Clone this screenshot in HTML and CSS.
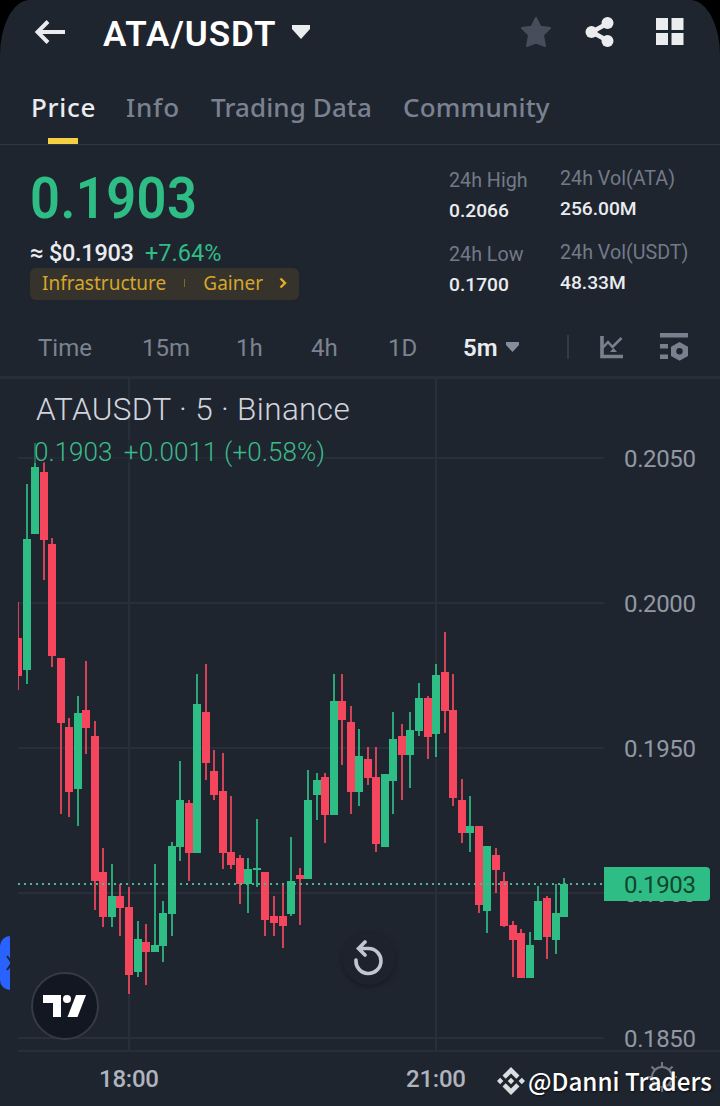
FILE: index.html
```
<!DOCTYPE html>
<html lang="en">
<head>
    <meta charset="UTF-8">
    <meta name="viewport" content="width=device-width, initial-scale=1.0">
    <title>ATA/USDT</title>
    <link rel="stylesheet" href="styles.css">
</head>
<body>
    <div class="app">
        <header>
            <svg class="back" width="32" height="26" viewBox="0 0 32 26"><path d="M30 13H3M13 2.500L2.500 13L13 23.500" fill="none" stroke="#eaecef" stroke-width="4"/></svg>
            <h1>ATA/USDT</h1>
            <svg class="caret" width="18" height="14" viewBox="0 0 18 14"><path d="M0 0H18V4L9 14L0 4Z" fill="#eaecef"/></svg>
            <div class="actions">
                <svg width="32" height="32" viewBox="0 0 32 32"><path d="M16 2L20.300 10.800L30 12L23 19L25 30L16 26.500L7 30L9 19L2 12L11.700 10.800Z" fill="#474d5b" stroke="#474d5b" stroke-width="2" stroke-linejoin="round"/></svg>
                <svg width="30" height="32" viewBox="0 0 30 32"><path d="M23 7L7 16L23 25" fill="none" stroke="#eaecef" stroke-width="4.500"/><circle cx="6.500" cy="16" r="6" fill="#eaecef"/><circle cx="22.500" cy="7" r="6" fill="#eaecef"/><circle cx="22.500" cy="25" r="6" fill="#eaecef"/></svg>
                <svg width="28" height="28" viewBox="0 0 28 28"><path d="M0 0H12V12H0ZM15.500 0H27.500V12H15.500ZM0 15H12V27H0ZM15.500 15H27.500V27H15.500Z" fill="#eaecef"/></svg>
            </div>
        </header>

        <nav class="tabs">
            <a class="tab tab-price active">Price</a>
            <a class="tab tab-info">Info</a>
            <a class="tab tab-data">Trading Data</a>
            <a class="tab tab-community">Community</a>
        </nav>

        <section class="ticker">
            <div class="ticker-main">
                <div class="price">0.1903</div>
                <div class="fiat"><span class="approx">≈</span><span class="usd">$0.1903</span><span class="change">+7.64%</span></div>
                <div class="tags">
                    <span>Infrastructure</span>
                    <i class="tag-line"></i>
                    <span>Gainer</span>
                    <svg width="8" height="12" viewBox="0 0 8 12"><path d="M1.500 1.500L6 6L1.500 10.500" fill="none" stroke="#e2ae25" stroke-width="2.400"/></svg>
                </div>
            </div>
            <div class="stats stats-range">
                <span class="label">24h High</span>
                <span class="value">0.2066</span>
                <span class="label">24h Low</span>
                <span class="value">0.1700</span>
            </div>
            <div class="stats stats-volume">
                <span class="label">24h Vol(ATA)</span>
                <span class="value">256.00M</span>
                <span class="label">24h Vol(USDT)</span>
                <span class="value">48.33M</span>
            </div>
        </section>

        <div class="intervals">
            <span class="time">Time</span>
            <span class="m15">15m</span>
            <span class="h1">1h</span>
            <span class="h4">4h</span>
            <span class="d1">1D</span>
            <span class="m5">5m</span>
            <svg class="m5-caret" width="13" height="10" viewBox="0 0 13 10"><path d="M0 0H13V3L6.500 10L0 3Z" fill="#848e9c"/></svg>
            <i class="divider"></i>
            <svg class="indicator" width="23" height="24" viewBox="0 0 23 24"><path d="M2 1V21.500H23" fill="none" stroke="#79818f" stroke-width="3.600"/><path d="M3 12.500L8 7L12.500 12L21.500 3" fill="none" stroke="#79818f" stroke-width="2.500"/><path d="M10 17L13.500 13L17 17Z" fill="#79818f"/></svg>
            <svg class="tuning" width="28" height="30" viewBox="0 0 28 30"><path d="M0 1H28V5.500H0ZM0 12H8V16.500H0ZM0 22.500H8V27H0Z" fill="#79818f"/><path d="M19.500 10L28 14.700V24L19.500 28.700L11 24V14.700Z" fill="#79818f"/><circle cx="19.500" cy="19.300" r="3.200" fill="#1f252f"/></svg>
        </div>

        <main class="chart">
            <svg class="plot" width="720" height="727" viewBox="0 379 720 727">
                <g class="grid">
                    <path d="M18 458H604M18 603H604M18 748H604M18 893H604M18 1038H604M18 1051H720M129 379V1050M436 379V1050"/>
                </g>
                <g id="candles"></g>
                <path class="price-line" d="M18 884H604"/>
                <g class="axis-price">
                    <text x="624" y="467" textLength="72">0.2050</text>
                    <text x="624" y="612" textLength="72">0.2000</text>
                    <text x="624" y="757" textLength="72">0.1950</text>
                    <text x="624" y="902" textLength="72">0.1900</text>
                    <text x="624" y="1047" textLength="72">0.1850</text>
                </g>
                <path d="M604 867H706Q710 867 710 871V897Q710 901 706 901H604Z" fill="#2ebd85"/>
                <text class="last-price" x="624" y="893" textLength="72">0.1903</text>
                <g class="axis-time">
                    <text x="99" y="1087" textLength="60">18:00</text>
                    <text x="406" y="1087" textLength="60">21:00</text>
                </g>
            </svg>
            <div class="legend">
                <div class="legend-title">ATAUSDT · 5 · Binance</div>
                <div class="legend-values"><span class="legend-last">0.1903</span><span class="legend-change">+0.0011 (+0.58%)</span></div>
            </div>
            <div class="drawer"><svg width="10" height="16" viewBox="0 0 10 16"><path d="M7 1L12 8L7 15" fill="none" stroke="#1b2337" stroke-width="2"/></svg></div>
            <div class="tv-logo">
                <svg width="44" height="24" viewBox="0 0 44 24"><path d="M0 1H18V23H10V9H0Z" fill="#fff"/><circle cx="24" cy="5" r="4" fill="#fff"/><path d="M33 1H43L34.500 23H24.500Z" fill="#fff"/></svg>
            </div>
            <div class="reset">
                <svg width="30" height="36" viewBox="0 0 30 36"><path d="M2 20A12.500 12.500 0 1 0 14.500 8.500H5M11 2L4.500 8.500L11 15" fill="none" stroke="#c3c6d0" stroke-width="3.600" stroke-linecap="round"/></svg>
            </div>
            <svg class="gear" width="32" height="32" viewBox="0 0 32 32"><g fill="none" stroke="#737780" stroke-width="2"><circle cx="16" cy="16" r="10"/><path d="M16 6V1M16 26V31M6 16H1M26 16H31M9 9L5.500 5.500M23 9L26.500 5.500M9 23L5.500 26.500M23 23L26.500 26.500"/></g></svg>
            <div class="watermark">
                <svg width="28" height="28" viewBox="0 0 28 28"><g fill="#dcdde0"><path d="M14 0L22.500 8.500L19.300 11.700L14 6.400L8.700 11.700L5.500 8.500Z"/><path d="M14 28L22.500 19.500L19.300 16.300L14 21.600L8.700 16.300L5.500 19.500Z"/><path d="M14 10.800L17.200 14L14 17.200L10.800 14ZM3.200 10.800L6.400 14L3.200 17.200L0 14ZM24.800 10.800L28 14L24.800 17.200L21.600 14Z"/></g></svg>
                <span>@Danni Traders</span>
            </div>
        </main>
    </div>
    <script src="chart.js"></script>
</body>
</html>
```
FILE: styles.css
```
body {
    margin: 0;
    background: #000;
    font-family: Roboto, "Liberation Sans", sans-serif;
    color: #eaecef;
}

.app {
    display: flex;
    flex-direction: column;
    width: 720px;
    height: 1106px;
    overflow: hidden;
    border-radius: 30px 30px 0 0 / 55px 55px 0 0;
    background: #1f252f;
}

svg {
    display: block;
    flex: none;
}

span, a, h1, .price, .legend-title {
    white-space: nowrap;
}

header {
    display: flex;
    align-items: center;
    height: 64px;
    padding: 0 36px 0 35px;
}

header h1 {
    width: 189px;
    margin: 5px 0 0 36px;
    font-size: 35px;
    font-weight: 600;
    line-height: 40px;
    letter-spacing: 1px;
    color: #fff;
}

.actions {
    display: flex;
    align-items: center;
    gap: 33px;
    margin-left: auto;
}

.actions svg:last-child {
    margin-left: 8px;
}

.tabs {
    display: flex;
    height: 81px;
    padding-left: 31px;
    box-sizing: border-box;
    border-bottom: 1px solid #303743;
    font-family: "Noto Sans", sans-serif;
    font-size: 26px;
    font-weight: 500;
    line-height: 36px;
    color: #7a8190;
}

.tab {
    box-sizing: border-box;
    padding-top: 25px;
}

.tab-price {
    width: 95px;
    letter-spacing: 0.7px;
}

.tab-info {
    width: 85px;
    letter-spacing: 0.8px;
}

.tab-data {
    width: 192px;
    letter-spacing: 0.1px;
}

.tab-community {
    letter-spacing: 0.2px;
}

.tab.active {
    color: #eaecef;
}

.tab.active::after {
    content: "";
    display: block;
    width: 30px;
    height: 6px;
    margin: 13px 0 0 17px;
    background: #f5d043;
}

.ticker {
    display: flex;
    height: 167px;
    padding-left: 30px;
}

.ticker-main {
    width: 419px;
}

.price {
    height: 60px;
    margin-top: 24px;
    font-size: 57px;
    font-weight: 600;
    line-height: 60px;
    letter-spacing: 0.5px;
    color: #2ebd85;
    transform: scaleX(0.92);
    transform-origin: left;
}

.fiat {
    display: flex;
    height: 30px;
    margin-top: 9px;
    font-size: 23.500px;
    font-weight: 500;
    line-height: 30px;
}

.approx {
    width: 19px;
    font-size: 24px;
}

.usd {
    width: 96px;
    letter-spacing: -0.3px;
}

.change {
    font-weight: 400;
    color: #2ebd85;
}

.tags {
    display: flex;
    align-items: center;
    width: 269px;
    height: 32px;
    padding: 0 0 2px 12px;
    box-sizing: border-box;
    border-radius: 6px;
    background: #35332c;
    font-family: "Noto Sans", sans-serif;
    font-size: 19px;
    color: #d6a62a;
}

.tag-line {
    width: 1px;
    height: 8px;
    margin: 0 18px;
    background: #80692a;
}

.tags svg {
    margin-left: 16px;
}

.stats {
    display: flex;
    flex-direction: column;
    padding-top: 23px;
    font-size: 19.700px;
    line-height: 26px;
}

.stats-range {
    width: 111px;
}

.stats-volume {
    padding-top: 21px;
}

.label {
    color: #727a88;
}

.value {
    margin: 4px 0 18px;
    font-weight: 500;
    line-height: 26px;
    font-size: 19.200px;
}

.intervals {
    display: flex;
    align-items: center;
    height: 67px;
    padding: 5px 0 0 38px;
    box-sizing: border-box;
    border-bottom: 3px solid #282e39;
    font-size: 24px;
    color: #7b8391;
}

.intervals span {
    padding-top: 2px;
}

.time {
    width: 104px;
}

.m15 {
    width: 94px;
}

.h1 {
    width: 75px;
}

.h4 {
    width: 77px;
}

.d1 {
    width: 75px;
}

.m5 {
    width: 43px;
    font-weight: 600;
    color: #eaecef;
}

.divider {
    width: 2px;
    height: 24px;
    margin: 0 31px 0 48px;
    background: #343b47;
}

.tuning {
    margin-left: 37px;
}

.chart {
    position: relative;
    flex: 1;
}

.grid path {
    fill: none;
    stroke: #292f3a;
    stroke-width: 2;
}

.up {
    fill: #2ebd85;
}

.down {
    fill: #f6465d;
}

.wick {
    opacity: 0.85;
}

.price-line {
    stroke: #48b894;
    stroke-width: 2;
    stroke-dasharray: 2 4;
}

.axis-price text {
    font-size: 24px;
    fill: #9298a3;
}

.last-price {
    font-size: 24px;
    fill: #12452f;
}

.axis-time text {
    font-size: 24px;
    font-weight: 500;
    fill: #b0b4be;
}

.legend {
    position: absolute;
    top: 12px;
    left: 36px;
}

.legend-title {
    font-size: 31.500px;
    font-weight: 300;
    line-height: 38px;
    letter-spacing: 0.35px;
    color: #d1d4dc;
}

.legend-values {
    display: flex;
    width: 291px;
    height: 24px;
    margin: 10px 0 0 -2px;
    background: rgba(31, 37, 47, 0.5);
    font-size: 26px;
    font-weight: 300;
    line-height: 26px;
    color: #3bbb8a;
}

.legend-last {
    width: 90px;
}

.legend-change {
    letter-spacing: 0.1px;
}

.drawer {
    position: absolute;
    top: 557px;
    left: 0;
    display: flex;
    align-items: center;
    width: 10px;
    height: 54px;
    overflow: hidden;
    border-radius: 10px 0 0 10px;
    background: #2962ff;
}

.tv-logo {
    position: absolute;
    top: 593px;
    left: 31px;
    display: flex;
    align-items: center;
    justify-content: center;
    width: 64px;
    height: 64px;
    border: 2px solid #363a45;
    border-radius: 50%;
    background: #131722;
}

.reset {
    position: absolute;
    top: 552px;
    left: 342px;
    display: flex;
    align-items: center;
    justify-content: center;
    width: 54px;
    height: 54px;
    border-radius: 50%;
    background: #1e222d;
    box-shadow: 0 2px 5px rgba(0, 0, 0, 0.3);
}

.gear {
    position: absolute;
    top: 682px;
    left: 646px;
}

.watermark {
    position: absolute;
    top: 684px;
    left: 497px;
    display: flex;
    align-items: center;
    gap: 3px;
    font-family: "Noto Sans CJK SC", sans-serif;
    font-size: 24.200px;
    font-weight: 500;
    line-height: 36px;
    color: #fff;
    text-shadow: 1px 1px 2px rgba(0, 0, 0, 0.7);
}
```
FILE: chart.js
```
// [direction, high, body top, body bottom, low]
const candles = [
    ['down', 602, 638, 676, 690], ['up', 484, 539, 670, 684], ['up', 443, 467, 534, 534], ['down', 462, 472, 540, 580],
    ['down', 538, 544, 656, 667], ['down', 658, 658, 723, 814], ['down', 718, 727, 792, 817], ['up', 696, 713, 789, 826],
    ['down', 661, 710, 728, 754], ['down', 721, 736, 881, 910], ['down', 848, 872, 917, 927], ['up', 864, 896, 917, 927],
    ['down', 884, 896, 908, 936], ['down', 887, 907, 975, 994], ['up', 921, 939, 972, 977], ['down', 924, 942, 952, 985],
    ['up', 864, 945, 952, 952], ['up', 901, 913, 946, 962], ['up', 842, 846, 914, 936], ['up', 761, 800, 847, 861],
    ['down', 800, 803, 853, 881], ['up', 674, 704, 853, 853], ['down', 664, 712, 763, 780], ['down', 750, 771, 795, 800],
    ['down', 753, 791, 853, 869], ['down', 796, 852, 865, 869], ['down', 855, 858, 884, 904], ['up', 858, 869, 884, 913],
    ['up', 819, 868, 870, 887], ['down', 872, 872, 920, 936], ['down', 896, 916, 923, 936], ['down', 884, 916, 926, 948],
    ['up', 837, 881, 914, 916], ['down', 868, 875, 879, 925], ['up', 770, 800, 879, 879], ['up', 773, 780, 795, 820],
    ['down', 773, 777, 815, 843], ['up', 674, 701, 815, 815], ['down', 674, 701, 720, 765], ['down', 706, 722, 792, 814],
    ['up', 729, 756, 792, 806], ['down', 747, 759, 778, 785], ['down', 747, 777, 844, 852], ['up', 774, 774, 847, 847],
    ['up', 712, 739, 781, 814], ['down', 724, 736, 755, 800], ['up', 712, 730, 755, 788], ['up', 683, 698, 731, 736],
    ['down', 696, 698, 737, 759], ['up', 664, 675, 734, 757], ['down', 632, 672, 711, 733], ['down', 674, 710, 798, 806],
    ['down', 779, 800, 833, 843], ['up', 796, 826, 833, 852], ['down', 826, 826, 905, 913], ['up', 846, 846, 911, 933],
    ['down', 848, 855, 870, 893], ['down', 872, 881, 926, 927], ['down', 921, 925, 940, 977], ['down', 929, 933, 978, 978],
    ['up', 932, 945, 978, 978], ['up', 886, 901, 940, 940], ['down', 896, 898, 937, 959], ['up', 884, 913, 940, 954],
    ['up', 878, 884, 917, 917]
];

const layer = document.getElementById('candles');

function addRect(className, x, y, width, height) {
    const rect = document.createElementNS('http://www.w3.org/2000/svg', 'rect');
    rect.setAttribute('class', className);
    rect.setAttribute('x', x);
    rect.setAttribute('y', y);
    rect.setAttribute('width', width);
    rect.setAttribute('height', height);
    layer.appendChild(rect);
}

candles.forEach((candle, i) => {
    const [direction, high, top, bottom, low] = candle;
    const center = Math.round(129 + (i - 13) * 8.53);
    // the plot starts at x = 18, so the first candle is cut in half
    const left = Math.max(18, center - 4);
    const wickLeft = Math.max(18, center - 1);
    addRect(direction + ' wick', wickLeft, high, center + 1 - wickLeft, low - high);
    addRect(direction, left, top, center + 4 - left, bottom - top);
});
```
